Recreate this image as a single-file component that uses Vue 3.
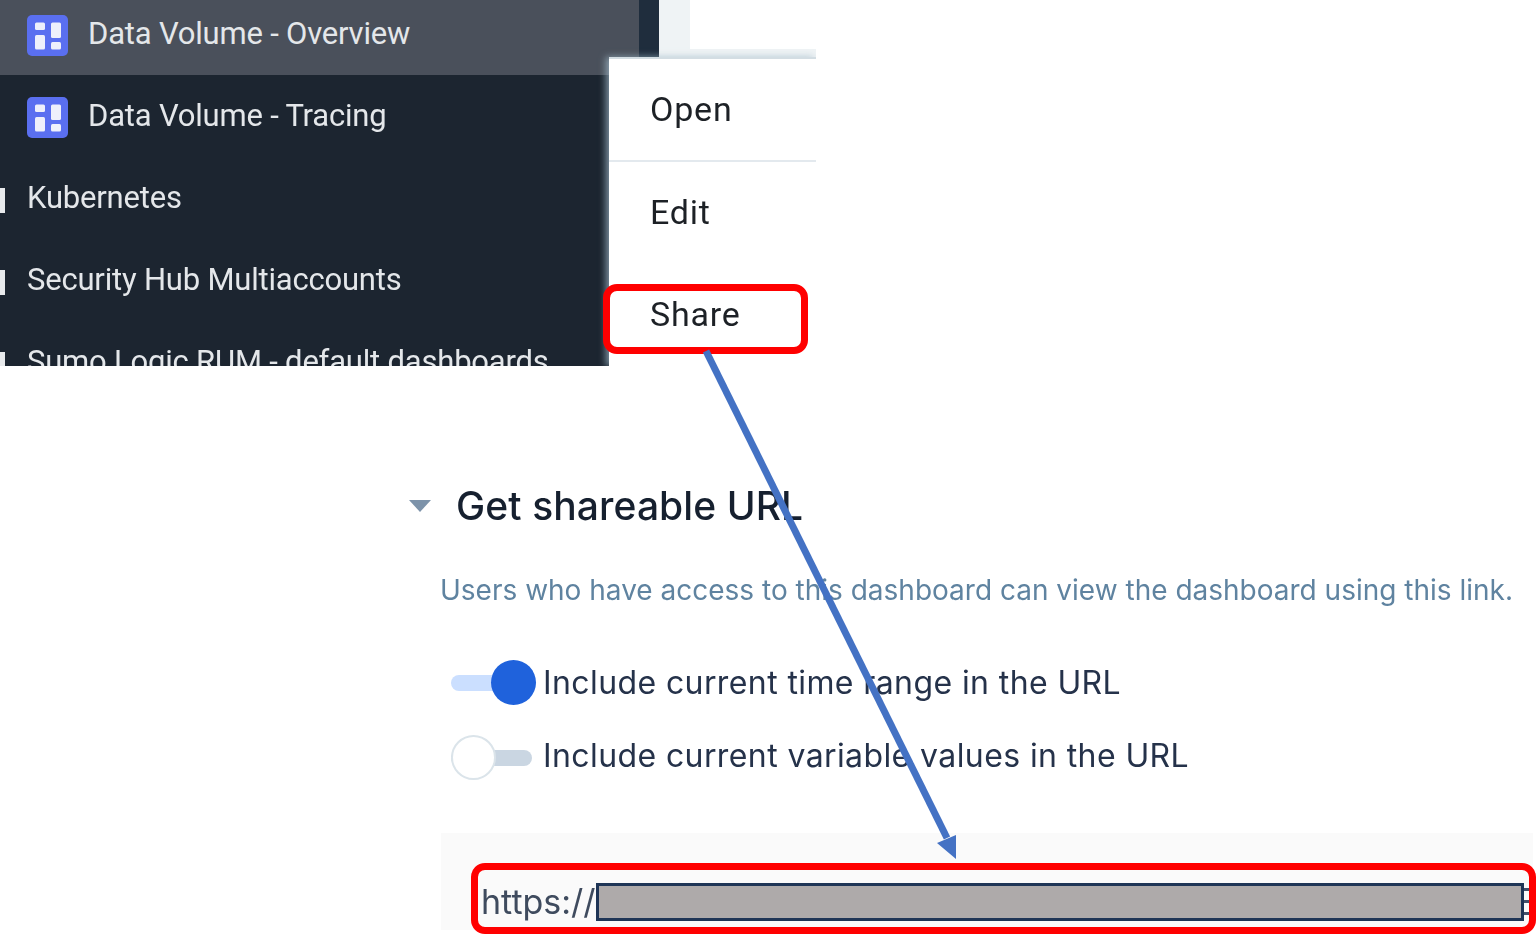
<script setup>
const boards = ['Data Volume - Overview', 'Data Volume - Tracing']
const folders = ['Kubernetes', 'Security Hub Multiaccounts', 'Sumo Logic RUM - default dashboards']
</script>

<template>
  <div class="page">
    <div class="top">
      <nav class="sidebar">
        <div class="list">
          <div v-for="(b, i) in boards" :key="b" class="row board" :class="{ active: i === 0 }">
            <svg class="dash" viewBox="0 0 41 41" width="41" height="41">
              <rect width="41" height="41" rx="5" fill="#5a6ff0" />
              <rect x="8" y="7.5" width="10" height="7.5" rx="1.5" fill="#eef0fb" />
              <rect x="24" y="7.5" width="10" height="15.5" rx="1.5" fill="#eef0fb" />
              <rect x="8" y="20" width="10" height="14.5" rx="1.5" fill="#eef0fb" />
              <rect x="24" y="27" width="10" height="7.5" rx="1.5" fill="#eef0fb" />
            </svg>
            <span>{{ b }}</span>
          </div>
          <div v-for="f in folders" :key="f" class="row folder">
            <i class="tick"></i>
            <span>{{ f }}</span>
          </div>
        </div>
        <div class="rail"></div>
      </nav>
      <div class="canvas">
        <div class="sheet"></div>
      </div>
      <div class="menu">
        <div class="item open">Open</div>
        <div class="item edit">Edit</div>
        <div class="item share">Share</div>
      </div>
    </div>

    <section class="panel">
      <h2 class="head">
        <svg class="caret" viewBox="0 0 22 12" width="22" height="12"><path d="M0 0H22L11 12Z" fill="#7d93aa" /></svg>
        <span>Get shareable URL</span>
      </h2>
      <p class="note">Users who have access to this dashboard can view the dashboard using this link.</p>
      <div class="opts">
        <div class="opt">
          <div class="switch on"><b></b></div>
          <span>Include current time range in the URL</span>
        </div>
        <div class="opt">
          <div class="switch off"><b></b></div>
          <span>Include current variable values in the URL</span>
        </div>
      </div>
      <div class="urlband">
        <span class="proto">https://</span>
        <div class="mask"></div>
        <div class="ticks"><i></i><i></i><i></i></div>
      </div>
    </section>

    <div class="frame frame-share"></div>
    <div class="frame frame-url"></div>
    <svg class="arrow" viewBox="0 0 1536 934" width="1536" height="934">
      <line x1="706" y1="351" x2="947" y2="838" stroke="#4472c4" stroke-width="7" />
      <path d="M956 859L937 843L956 835Z" fill="#4472c4" />
    </svg>
  </div>
</template>

<style scoped>
.page {
  position: relative;
  width: 1536px;
  height: 934px;
  overflow: hidden;
  background: #fff;
}
.top {
  position: relative;
  display: flex;
  width: 816px;
  height: 366px;
  overflow: hidden;
  filter: blur(0.4px);
}
.sidebar {
  display: flex;
  width: 659px;
  flex: none;
  background: #1c2530;
}
.list {
  width: 639px;
  flex: none;
  margin-top: -8px;
}
.rail {
  flex: 1;
  background: #1f2d3d;
}
.row {
  display: flex;
  align-items: center;
  box-sizing: border-box;
  height: 82px;
  font-family: Roboto, sans-serif;
  font-size: 31px;
  letter-spacing: -0.2px;
  color: #e4e7ea;
  white-space: nowrap;
}
.board {
  gap: 20px;
  padding-left: 27px;
}
.dash {
  margin-top: 5px;
}
.active {
  background: #4a505b;
  box-shadow: 0 1px 0 #4a505b;
}
.folder {
  gap: 22px;
}
.tick {
  width: 5px;
  height: 25px;
  margin-top: 6px;
  background: #e8eaec;
}
.canvas {
  flex: 1;
  padding-left: 31px;
  height: 57px;
  background: #eff3f5;
}
.sheet {
  height: 49px;
  background: #fff;
}
.menu {
  position: absolute;
  left: 609px;
  top: 57px;
  width: 207px;
  height: 309px;
  background: #fff;
  border-top: 2px solid #d3dde3;
  box-sizing: border-box;
  box-shadow: -3px 0 7px rgba(160, 185, 200, 0.75);
  font-family: Roboto, sans-serif;
  font-size: 34px;
  letter-spacing: 0.8px;
  color: #1d2126;
}
.item {
  padding-left: 41px;
  display: flex;
  align-items: center;
  box-sizing: border-box;
  padding-bottom: 2px;
}
.open {
  height: 103px;
  border-bottom: 2px solid #e3e9ee;
}
.edit {
  height: 102px;
}
.share {
  height: 102px;
}
.panel {
  position: relative;
  height: 568px;
  box-sizing: border-box;
  padding: 114px 3px 0 441px;
  filter: blur(0.4px);
}
.head {
  display: flex;
  align-items: center;
  gap: 25px;
  margin: 0 0 0 -32px;
  height: 50px;
  font-family: Inter, sans-serif;
  font-size: 39px;
  font-weight: 500;
  letter-spacing: 0.1px;
  color: #16202f;
  white-space: nowrap;
}
.caret {
  margin-top: 2px;
}
.note {
  margin: 42px 0 0 -1px;
  height: 36px;
  line-height: 36px;
  font-family: Inter, sans-serif;
  font-size: 28px;
  color: #5f83a0;
  white-space: nowrap;
}
.opts {
  margin-top: 51px;
  padding-left: 10px;
  display: flex;
  flex-direction: column;
  gap: 27px;
}
.opt {
  display: flex;
  align-items: center;
  gap: 7px;
  height: 46px;
  font-family: Inter, sans-serif;
  font-size: 32px;
  letter-spacing: 0.4px;
  color: #25324a;
  white-space: nowrap;
}
.switch {
  position: relative;
  width: 85px;
  height: 16px;
  flex: none;
  border-radius: 8px;
}
.switch b {
  position: absolute;
  top: -15px;
  box-sizing: border-box;
  width: 45px;
  height: 45px;
  border-radius: 50%;
}
.on {
  margin-top: 2px;
  background: #cbdfff;
}
.on b {
  right: 0;
  background: #1f62dc;
}
.off {
  width: 81px;
  margin-top: 5px;
  margin-right: 4px;
  background: #cad6e2;
}
.off b {
  left: 0;
  background: #fff;
  border: 2px solid #dbe4ea;
}
.urlband {
  display: flex;
  align-items: center;
  height: 97px;
  margin-top: 55px;
  padding: 40px 0 0 40px;
  box-sizing: border-box;
  background: #fafafa;
}
.proto {
  font-family: Inter, sans-serif;
  font-size: 34px;
  color: #3f4b5e;
  width: 115px;
  flex: none;
}
.mask {
  width: 928px;
  height: 38px;
  box-sizing: border-box;
  flex: none;
  background: #aeaaaa;
  border: 3px solid #1f3556;
}
.ticks {
  display: flex;
  flex-direction: column;
  gap: 9px;
}
.ticks i {
  display: block;
  width: 6px;
  height: 3px;
  background: #44506a;
}
.frame {
  position: absolute;
  box-sizing: border-box;
  border: 7px solid #ff0000;
  border-radius: 14px;
}
.frame-share {
  left: 603px;
  top: 284px;
  width: 205px;
  height: 70px;
}
.frame-url {
  left: 471px;
  top: 863px;
  width: 1065px;
  height: 71px;
}
.arrow {
  position: absolute;
  left: 0;
  top: 0;
  pointer-events: none;
}
</style>
